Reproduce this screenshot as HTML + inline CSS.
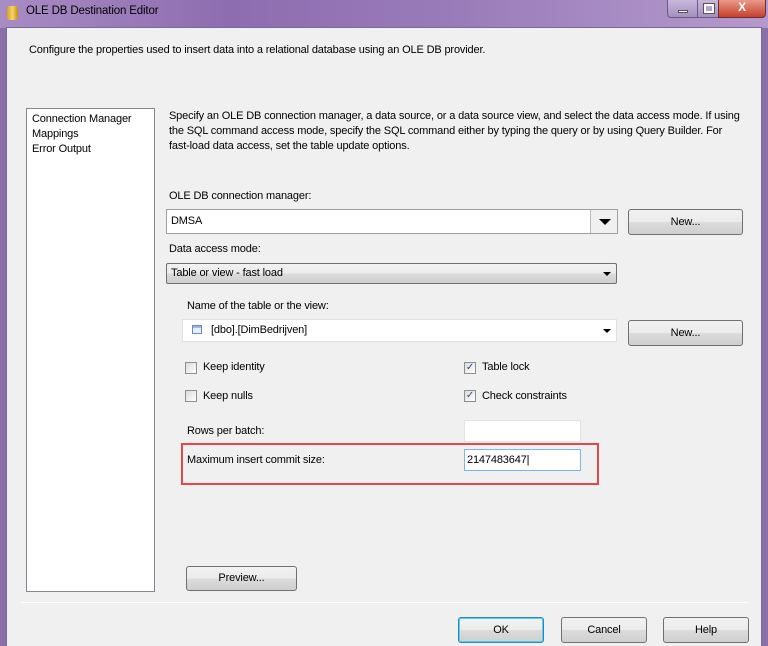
<!DOCTYPE html>
<html><head><style>
*{box-sizing:border-box;margin:0;padding:0}
body{width:768px;height:646px;overflow:hidden;background:#8a6fa8;font-family:"Liberation Sans",sans-serif;font-size:11px;letter-spacing:-0.15px;color:#000;position:relative}
.title{position:absolute;left:0;top:0;width:768px;height:28px;background:linear-gradient(90deg,#a88cc4 0%,#8e6cb0 30%,#9a7cba 60%,#b49acc 100%)}
.client{position:absolute;left:6px;top:27px;width:756px;height:619px;background:#f0f0f0;border:1px solid #7a6898;border-bottom:none}
.a{position:absolute;white-space:nowrap}
.btn{position:absolute;border:1px solid #707070;border-radius:3px;background:linear-gradient(#f2f2f2 0%,#ebebeb 50%,#dcdcdc 51%,#cfcfcf 100%);text-align:center;font-size:11px}
.box{position:absolute;background:#fff;border:1px solid #abadb3}
.cb{position:absolute;width:12px;height:12px;border:1px solid #8e8f8f;background:linear-gradient(135deg,#dcdcdc,#fff)}
</style></head><body>
<div class="title">
 <div class="a" style="left:7px;top:6px;width:11px;height:14px;background:linear-gradient(90deg,#d9a21f,#f5d56a,#c98b10);border-radius:3px"></div>
 <div class="a" style="left:26px;top:5px;font-size:11.5px;color:#000">OLE DB Destination Editor</div>
 <div class="a" style="left:667px;top:0;width:31px;height:18px;border:1px solid #6a5a80;border-top:none;border-radius:0 0 0 4px;background:linear-gradient(#c9b8dc,#a58fc0)"><div style="position:absolute;left:10px;top:10px;width:10px;height:3px;background:#fff;border:1px solid #555"></div></div>
 <div class="a" style="left:697px;top:0;width:22px;height:18px;border:1px solid #6a5a80;border-top:none;background:linear-gradient(#c9b8dc,#a58fc0)"><div style="position:absolute;left:6px;top:4px;width:10px;height:9px;border:2px solid #fff;outline:1px solid #555"></div></div>
 <div class="a" style="left:718px;top:0;width:48px;height:18px;border:1px solid #6a3030;border-top:none;border-radius:0 0 4px 0;background:linear-gradient(#e89a8a,#c8402c);color:#fff;font-weight:bold;font-size:12px;text-align:center;line-height:15px">X</div>
</div>
<div class="client">
 <div class="a" style="left:22px;top:16px">Configure the properties used to insert data into a relational database using an OLE DB provider.</div>
 <div class="box" style="left:19px;top:80px;width:129px;height:484px;border-color:#828790">
  <div class="a" style="left:5px;top:3px;line-height:15px">Connection Manager<br>Mappings<br>Error Output</div>
 </div>
 <div class="a" style="left:162px;top:81px;line-height:15px">Specify an OLE DB connection manager, a data source, or a data source view, and select the data access mode. If using<br>the SQL command access mode, specify the SQL command either by typing the query or by using Query Builder. For<br>fast-load data access, set the table update options.</div>
 <div class="a" style="left:162px;top:162px">OLE DB connection manager:</div>
 <div class="box" style="left:159px;top:181px;width:452px;height:25px;border-color:#a0a0a0"><div class="a" style="left:4px;top:5px">DMSA</div>
  <div class="a" style="left:423px;top:0;width:27px;height:23px;border-left:1px solid #bbb;background:#f0f0f0"><div style="position:absolute;left:8px;top:9px;border-left:6px solid transparent;border-right:6px solid transparent;border-top:6px solid #000"></div></div></div>
 <div class="btn" style="left:621px;top:181px;width:115px;height:26px;line-height:24px">New...</div>
 <div class="a" style="left:162px;top:215px">Data access mode:</div>
 <div class="btn" style="left:159px;top:235px;width:451px;height:21px;line-height:19px;text-align:left;padding-left:4px;border-radius:2px">Table or view - fast load<div style="position:absolute;right:5px;top:8px;border-left:4px solid transparent;border-right:4px solid transparent;border-top:4px solid #000"></div></div>
 <div class="a" style="left:180px;top:272px">Name of the table or the view:</div>
 <div class="box" style="left:175px;top:291px;width:435px;height:23px;border-color:#e0e0e0">
  <div class="a" style="left:9px;top:5px;width:10px;height:9px;border:1px solid #6a8ab8;background:linear-gradient(#9ab8e0 30%,#e6eef8 30%)"></div>
  <div class="a" style="left:28px;top:4px">[dbo].[DimBedrijven]</div>
  <div style="position:absolute;right:5px;top:9px;border-left:4px solid transparent;border-right:4px solid transparent;border-top:4px solid #000"></div></div>
 <div class="btn" style="left:621px;top:292px;width:115px;height:26px;line-height:24px">New...</div>
 <div class="cb" style="left:178px;top:334px"></div><div class="a" style="left:196px;top:333px">Keep identity</div>
 <div class="cb" style="left:178px;top:362px"></div><div class="a" style="left:196px;top:362px">Keep nulls</div>
 <div class="cb" style="left:457px;top:334px;color:#2a4a8a;font-size:10px;line-height:10px;text-align:center">✓</div><div class="a" style="left:475px;top:333px">Table lock</div>
 <div class="cb" style="left:457px;top:362px;color:#2a4a8a;font-size:10px;line-height:10px;text-align:center">✓</div><div class="a" style="left:475px;top:362px">Check constraints</div>
 <div class="a" style="left:180px;top:397px">Rows per batch:</div>
 <div class="box" style="left:457px;top:392px;width:117px;height:22px;border-color:#e2e3ea"></div>
 <div class="a" style="left:174px;top:415px;width:418px;height:42px;border:2px solid #e54848"></div>
 <div class="a" style="left:180px;top:426px">Maximum insert commit size:</div>
 <div class="box" style="left:457px;top:421px;width:117px;height:22px;border-color:#7eb4ea"><div class="a" style="left:2px;top:4px">2147483647|</div></div>
 <div class="btn" style="left:179px;top:538px;width:111px;height:25px;line-height:23px">Preview...</div>
 <div class="a" style="left:14px;top:574px;width:727px;height:1px;background:#a0a0a0;border-bottom:1px solid #fff"></div>
 <div class="btn" style="left:451px;top:589px;width:86px;height:26px;line-height:24px;border-color:#3c7fb1;box-shadow:inset 0 0 0 1px #48d6f7">OK</div>
 <div class="btn" style="left:554px;top:589px;width:86px;height:26px;line-height:24px">Cancel</div>
 <div class="btn" style="left:656px;top:589px;width:86px;height:26px;line-height:24px">Help</div>
</div>
</body></html>
